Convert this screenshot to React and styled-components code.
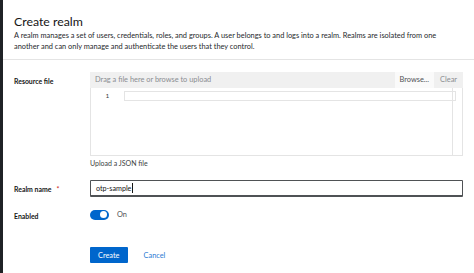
import React from 'react';
import styled, { createGlobalStyle } from 'styled-components';

const GlobalStyle = createGlobalStyle`
  html, body {
    margin: 0;
    padding: 0;
    background: #fff;
  }
  body {
    font-family: Lato, 'Open Sans', 'Liberation Sans', sans-serif;
    color: #151515;
  }
`;

const Page = styled.div`
  display: flex;
  width: 474px;
  height: 273px;
  overflow: hidden;
`;

const Sidebar = styled.div`
  width: 3px;
  flex-shrink: 0;
  background: #1f2226;
`;

const Main = styled.div`
  flex: 1;
  display: flex;
  flex-direction: column;
`;

const Header = styled.section`
  height: 60px;
  box-sizing: border-box;
  padding: 14px 14px 0 11px;
  border-bottom: 1px solid #e4e4e4;
`;

const Title = styled.h1`
  margin: 0 0 1px;
  font-size: 12.3px;
  line-height: 16px;
  font-weight: 400;
`;

const Description = styled.p`
  margin: 0;
  font-size: 7.4px;
  line-height: 10.5px;
  color: #26292c;
`;

const Form = styled.div`
  display: grid;
  grid-template-columns: 76px 373px;
  padding: 12px 0 0 11px;
  row-gap: 12px;
`;

const Label = styled.div`
  font-size: 6.9px;
  font-weight: 700;
  line-height: 10px;
  padding-top: ${p => p.$offset || 0}px;
`;

const Required = styled.span`
  color: #c9190b;
  margin-left: 5px;
  font-weight: 400;
`;

const Field = styled.div`
  display: flex;
  flex-direction: column;
`;

const UploadBar = styled.div`
  display: flex;
  height: 16px;
  background: #f0f0f0;
`;

const Placeholder = styled.div`
  flex: 1;
  font-size: 7.4px;
  line-height: 16px;
  padding-left: 5px;
  color: #8a8d90;
`;

const BarButton = styled.div`
  font-size: 7.4px;
  line-height: 16px;
  padding: 0 ${p => (p.$light ? 6 : 5)}px;
  background: ${p => (p.$light ? '#f0f0f0' : '#fafafa')};
  color: ${p => (p.$light ? '#8a8d90' : '#4f5255')};
`;

const Editor = styled.div`
  display: flex;
  height: 68px;
  box-sizing: border-box;
  border: 1px solid #e4e4e4;
  border-top: none;
  padding-right: 9px;
`;

const Gutter = styled.div`
  width: 33px;
  font-size: 6.5px;
  line-height: 10px;
  padding-top: 3px;
  text-align: center;
  color: #3c3f42;
`;

const CodeArea = styled.div`
  flex: 1;
  padding-top: 3px;
  border-right: 1px solid #e4e4e4;
`;

const CodeLine = styled.div`
  height: 8px;
  border: 1px solid #e4e4e4;
  margin-right: -4px;
`;

const Helper = styled.div`
  font-size: 7px;
  line-height: 10px;
  margin-top: 2px;
  color: #3c3f42;
`;

const TextInput = styled.div`
  height: 17px;
  box-sizing: border-box;
  border: 1px solid #4f5255;
  border-bottom-width: 2px;
  border-radius: 1px;
  font-size: 7.2px;
  padding-left: 5px;
  display: flex;
  align-items: center;
`;

const Caret = styled.span`
  display: inline-block;
  width: 1px;
  height: 10px;
  background: #151515;
  margin-left: 1px;
`;

const SwitchRow = styled.div`
  display: flex;
  align-items: center;
  gap: 8px;
  height: 11px;
`;

const Switch = styled.div`
  width: 19px;
  height: 10px;
  border-radius: 6px;
  background: #0066cc;
  display: flex;
  align-items: center;
  justify-content: flex-end;
  padding-right: 2px;
  box-sizing: border-box;
`;

const Knob = styled.div`
  width: 7px;
  height: 7px;
  border-radius: 50%;
  background: #fff;
`;

const SwitchText = styled.span`
  font-size: 7.4px;
  color: #4f5255;
`;

const Actions = styled.div`
  display: flex;
  align-items: center;
  gap: 16px;
  margin-top: 27px;
`;

const Button = styled.button`
  font-family: inherit;
  font-size: 7.4px;
  height: 16px;
  padding: 0 ${p => (p.$primary ? 8 : 0)}px;
  border: none;
  border-radius: 1px;
  background: ${p => (p.$primary ? '#0066cc' : 'transparent')};
  color: ${p => (p.$primary ? '#fff' : '#2b7bd3')};
`;

export default function App() {
  return (
    <>
      <GlobalStyle />
      <Page>
        <Sidebar />
        <Main>
          <Header>
            <Title>Create realm</Title>
            <Description>
              A realm manages a set of users, credentials, roles, and groups. A user belongs to and logs into a realm. Realms are isolated from one
              another and can only manage and authenticate the users that they control.
            </Description>
          </Header>
          <Form>
            <Label $offset={4}>Resource file</Label>
            <Field>
              <UploadBar>
                <Placeholder>Drag a file here or browse to upload</Placeholder>
                <BarButton>Browse...</BarButton>
                <BarButton $light>Clear</BarButton>
              </UploadBar>
              <Editor>
                <Gutter>1</Gutter>
                <CodeArea>
                  <CodeLine />
                </CodeArea>
              </Editor>
              <Helper>Upload a JSON file</Helper>
            </Field>

            <Label $offset={4}>
              Realm name<Required>*</Required>
            </Label>
            <Field>
              <TextInput>
                otp-sample<Caret />
              </TextInput>
            </Field>

            <Label $offset={2}>Enabled</Label>
            <Field>
              <SwitchRow>
                <Switch>
                  <Knob />
                </Switch>
                <SwitchText>On</SwitchText>
              </SwitchRow>
              <Actions>
                <Button $primary>Create</Button>
                <Button>Cancel</Button>
              </Actions>
            </Field>
          </Form>
        </Main>
      </Page>
    </>
  );
}
